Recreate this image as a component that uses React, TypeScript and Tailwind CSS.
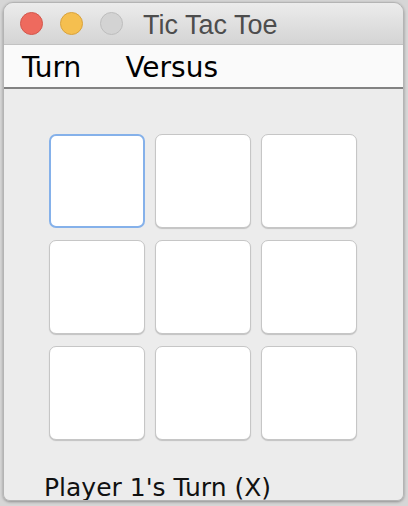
const cells = Array.from({ length: 9 }, (_, i) => i);

export default function App() {
  return (
    <div className="w-[408px] h-[506px] bg-[#d6d6d6] pt-[2px] pl-[3px] overflow-hidden">
      <div className="w-[401px] h-[499px] rounded-t-[10px] rounded-b-[7px] overflow-hidden flex flex-col border border-[#b4b4b4] shadow-[0_1px_3px_rgba(0,0,0,0.35)]">
        {/* title bar */}
        <div className="h-[42px] shrink-0 flex items-center bg-gradient-to-b from-[#ececec] to-[#d4d4d4] border-b border-[#c2c2c2]">
          <div className="flex items-center gap-[17px] pl-[16px]">
            <span className="w-[23px] h-[23px] rounded-full bg-[#ee6a5e] border border-[#d2574c]" />
            <span className="w-[23px] h-[23px] rounded-full bg-[#f5bf4f] border border-[#d8a23d]" />
            <span className="w-[23px] h-[23px] rounded-full bg-[#d3d3d3] border border-[#bdbdbd]" />
          </div>
          <span
            className="ml-[20px] mt-[3px] text-[27px] text-[#4d4d4d] leading-none"
            style={{ fontFamily: '"Liberation Sans", Arial, sans-serif' }}
          >
            Tic Tac Toe
          </span>
        </div>

        {/* menu bar */}
        <div
          className="h-[44px] shrink-0 flex items-center gap-[44px] pl-[18px] pt-[3px] bg-[#fafafa] border-b-2 border-[#828282] text-[28px] text-black"
          style={{ fontFamily: '"DejaVu Sans", Verdana, sans-serif' }}
        >
          <span>Turn</span>
          <span>Versus</span>
        </div>

        {/* board */}
        <div className="flex-1 bg-[#ececec] flex flex-col pl-[45px] pt-[45px]">
          <div className="grid grid-cols-[repeat(3,96px)] grid-rows-[repeat(3,94px)] gap-x-[10px] gap-y-[12px]">
            {cells.map((i) => (
              <button
                key={i}
                className={
                  i === 0
                    ? "rounded-[7px] bg-white border-2 border-[#85b1ea]"
                    : "rounded-[7px] bg-white border border-[#c6c6c6] shadow-[0_1px_1px_rgba(0,0,0,0.18)]"
                }
              />
            ))}
          </div>
          <div
            className="mt-[35px] -ml-[5px] text-[25px] leading-none text-[#111]"
            style={{ fontFamily: '"DejaVu Sans", Verdana, sans-serif' }}
          >
            Player 1's Turn (X)
          </div>
        </div>
      </div>
    </div>
  );
}
